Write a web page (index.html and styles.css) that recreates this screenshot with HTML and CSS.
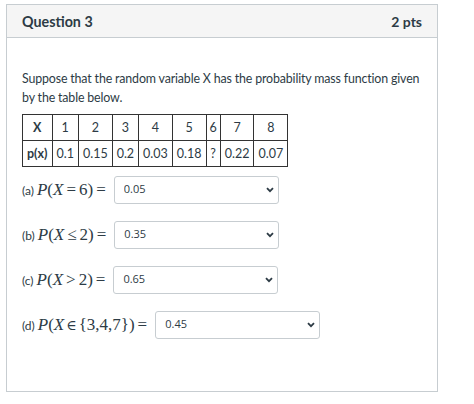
FILE: index.html
```html
<html lang="en">
<head>
  <meta charset="UTF-8">
  <title>Question 3</title>
  <link rel="stylesheet" href="styles.css">
</head>
<body>

  <!-- Question card -->
  <div class="question">

    <div class="question-header">
      <span class="question-name">Question 3</span>
      <span class="question-points">2 pts</span>
    </div>

    <div class="question-body">
      <p class="question-text">
        Suppose that the random variable X has the probability mass function given by the table below.
      </p>

      <table class="pmf">
        <tr>
          <th>X</th><td>1</td><td>2</td><td>3</td><td>4</td><td>5</td><td class="narrow">6</td><td>7</td><td>8</td>
        </tr>
        <tr>
          <th>p(x)</th><td>0.1</td><td>0.15</td><td>0.2</td><td>0.03</td><td>0.18</td><td class="narrow">?</td><td>0.22</td><td>0.07</td>
        </tr>
      </table>

      <!-- Answers -->
      <div class="answer">
        <span class="answer-label">(a)</span>
        <span class="math"><i>P</i>(<i>X</i><span class="op">=</span>6)<span class="op">=</span></span>
        <div class="dropdown">
          <select><option>0.05</option></select>
          <svg class="chevron" width="8" height="6" viewBox="0 0 8 6"><path d="M1 1.2 L4 4.2 L7 1.2" fill="none" stroke="#2d3b45" stroke-width="1.8"/></svg>
        </div>
      </div>

      <div class="answer">
        <span class="answer-label">(b)</span>
        <span class="math"><i>P</i>(<i>X</i><span class="op">≤</span>2)<span class="op">=</span></span>
        <div class="dropdown">
          <select><option>0.35</option></select>
          <svg class="chevron" width="8" height="6" viewBox="0 0 8 6"><path d="M1 1.2 L4 4.2 L7 1.2" fill="none" stroke="#2d3b45" stroke-width="1.8"/></svg>
        </div>
      </div>

      <div class="answer">
        <span class="answer-label">(c)</span>
        <span class="math"><i>P</i>(<i>X</i><span class="op">&gt;</span>2)<span class="op">=</span></span>
        <div class="dropdown">
          <select><option>0.65</option></select>
          <svg class="chevron" width="8" height="6" viewBox="0 0 8 6"><path d="M1 1.2 L4 4.2 L7 1.2" fill="none" stroke="#2d3b45" stroke-width="1.8"/></svg>
        </div>
      </div>

      <div class="answer">
        <span class="answer-label">(d)</span>
        <span class="math"><i>P</i>(<i>X</i><span class="op small">∈</span>{3,4,7})<span class="op">=</span></span>
        <div class="dropdown">
          <select><option>0.45</option></select>
          <svg class="chevron" width="8" height="6" viewBox="0 0 8 6"><path d="M1 1.2 L4 4.2 L7 1.2" fill="none" stroke="#2d3b45" stroke-width="1.8"/></svg>
        </div>
      </div>
    </div>

  </div>
  <!-- End of Question card -->

</body>
</html>
```

FILE: styles.css
```css
html,
body {
  background-color: white;
  font-family: Lato, "Open Sans", sans-serif;
  color: #2d3b45;
  margin: 0;
}

.question {
  border: 1px solid #c7cdd1;
  box-sizing: border-box;
  height: 388px;
  margin: 4px 0 0 6px;
  width: 432px;
}

.question-header {
  align-items: center;
  background-color: #f5f5f5;
  border-bottom: 1px solid #c7cdd1;
  display: flex;
  height: 32px;
  justify-content: space-between;
  padding: 0 15px;
}

.question-name {
  font-size: 14.3px;
  font-weight: bold;
}

.question-points {
  font-size: 14px;
  font-weight: bold;
}

.question-body {
  padding: 31px 15px 0 15px;
}

.question-text {
  font-size: 12.4px;
  letter-spacing: -0.15px;
  line-height: 19px;
  margin: 0 0 7px 0;
}

.pmf {
  border-collapse: collapse;
  font-size: 12.5px;
  margin-bottom: 9px;
}

.pmf th,
.pmf td {
  border: 1px solid #333;
  height: 26px;
  padding: 0 4px;
  text-align: center;
}

.pmf td.narrow {
  padding: 0 3px;
}

.pmf th {
  font-weight: bold;
}

.answer {
  align-items: center;
  display: flex;
  height: 28px;
  margin-bottom: 17px;
}

.answer-label {
  font-size: 12px;
  margin-right: 3px;
}

.math {
  font-family: "Liberation Serif", "DejaVu Serif", serif;
  font-size: 17px;
  margin-right: 5px;
  white-space: nowrap;
}

.math .op {
  margin: 0 3px;
}

.math .op.small {
  font-size: 14px;
  margin: 0 2px;
}

.dropdown {
  position: relative;
}

.dropdown select {
  appearance: none;
  background-color: white;
  border: 1px solid #c7cdd1;
  border-radius: 3px;
  color: #2d3b45;
  font-family: "Open Sans", Lato, sans-serif;
  font-size: 11px;
  height: 28px;
  padding: 0 0 4px 9px;
  width: 165px;
}

.chevron {
  position: absolute;
  right: 5px;
  top: 11px;
}
```
